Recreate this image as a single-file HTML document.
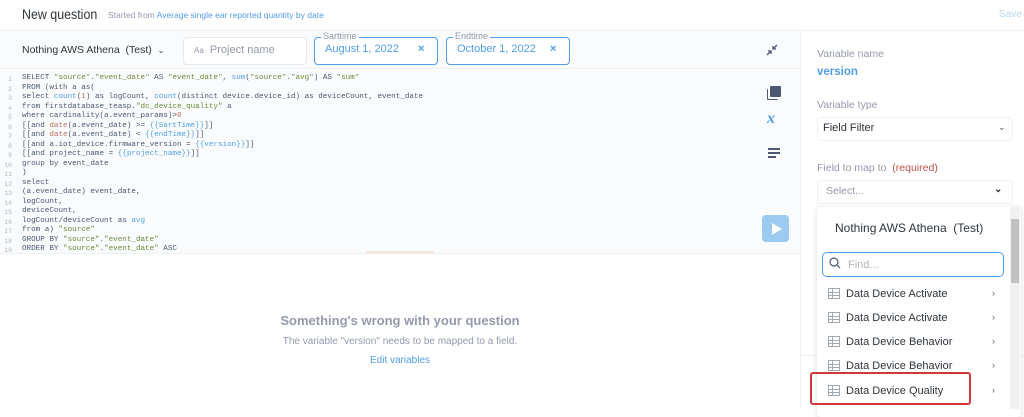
<!DOCTYPE html>
<html><head><meta charset="utf-8"><style>
*{box-sizing:border-box;margin:0;padding:0}
body{width:1024px;height:409px;overflow:hidden;background:#fff;font-family:"Liberation Sans",sans-serif;position:relative;color:#4c5773}
.abs{position:absolute}
.code{font-family:"Liberation Mono",monospace;font-size:7.6px;line-height:9.5px;color:#4c5773;white-space:pre}
.ln{font-family:"Liberation Mono",monospace;font-size:6.5px;line-height:9.5px;color:#b0b8c0;white-space:pre;text-align:right}
.s{color:#6a8a3a}.k{color:#509ee3}.r{color:#c07060}
.item{position:absolute;left:828px;font-size:11px;color:#2e353b}
.ic{display:inline-block;width:12px;height:11px;border:1px solid #a0a8b0;vertical-align:-2px;margin-right:6px;background:linear-gradient(#a0a8b0,#a0a8b0) 3px 0/1px 100% no-repeat,linear-gradient(#a0a8b0,#a0a8b0) 0 3px/100% 1px no-repeat,linear-gradient(#a0a8b0,#a0a8b0) 0 6px/100% 1px no-repeat}
.chev{position:absolute;left:992px;font-size:9px;color:#4c5773}
</style></head><body>
<div class="abs" style="left:22px;top:7px;font-size:13.5px;color:#2e353b;transform:scaleX(0.92);transform-origin:left">New question</div>
<div class="abs" style="left:108px;top:10px;font-size:8.5px;color:#949aab">Started from <span style="color:#509ee3">Average single ear reported quantity by date</span></div>
<div class="abs" style="left:999px;top:9px;font-size:10px;color:#b8d4ee">Save</div>
<div class="abs" style="left:0;top:30px;width:1024px;height:1px;background:#eef0f2"></div>
<div class="abs" style="left:0;top:31px;width:800px;height:38px;background:#f9fbfc;border-bottom:1px solid #eef0f2"></div>
<div class="abs" style="left:22px;top:44px;font-size:10.5px;color:#2e353b">Nothing AWS Athena &nbsp;(Test) &nbsp;<span style="font-size:8px">⌄</span></div>
<div class="abs" style="left:183px;top:37px;width:124px;height:28px;border:1px solid #e6e9ec;border-radius:4px;background:#fff"></div>
<div class="abs" style="left:194px;top:44px;font-size:11px;color:#949aab"><span style="font-size:8px">Aa</span>&nbsp; Project name</div>
<div class="abs" style="left:314px;top:37px;width:124px;height:28px;border:1px solid #509ee3;border-radius:4px;background:#fff"></div>
<div class="abs" style="left:321px;top:31px;font-size:9px;color:#949aab;background:#f9fbfc;padding:0 2px">Sarttime</div>
<div class="abs" style="left:325px;top:43px;font-size:11px;color:#509ee3">August 1, 2022</div>
<div class="abs" style="left:418px;top:43px;font-size:11px;color:#509ee3;font-weight:bold">×</div>
<div class="abs" style="left:446px;top:37px;width:124px;height:28px;border:1px solid #509ee3;border-radius:4px;background:#fff"></div>
<div class="abs" style="left:453px;top:31px;font-size:9px;color:#949aab;background:#f9fbfc;padding:0 2px">Endtime</div>
<div class="abs" style="left:457px;top:43px;font-size:11px;color:#509ee3">October 1, 2022</div>
<div class="abs" style="left:550px;top:43px;font-size:11px;color:#509ee3;font-weight:bold">×</div>
<svg class="abs" style="left:765px;top:43px" width="14" height="14"><path d="M2 12L6 8M3 8h3v3M12 2L8 6M11 6H8V3" stroke="#4c5773" stroke-width="1.3" fill="none"/></svg>
<div class="abs" style="left:0;top:70px;width:800px;height:184px;background:#f9fbfc;border-bottom:1px solid #eef0f2"></div>
<div class="abs ln" style="left:0;top:75px;width:12px">1
2
3
4
5
6
7
8
9
10
11
12
13
14
15
16
17
18
19</div>
<div class="abs code" style="left:22px;top:74px;height:179px;overflow:hidden">SELECT <span class="s">"source"</span>.<span class="s">"event_date"</span> AS <span class="s">"event_date"</span>, <span class="k">sum</span>(<span class="s">"source"</span>.<span class="s">"avg"</span>) AS <span class="s">"sum"</span>
FROM (with a as(
select <span class="k">count</span>(<span class="r">1</span>) as logCount, <span class="k">count</span>(distinct device.device_id) as deviceCount, event_date
from firstdatabase_teasp.<span class="s">"dc_device_quality"</span> a
where cardinality(a.event_params)&gt;<span class="r">0</span>
[[and <span class="r">date</span>(a.event_date) &gt;= <span class="k">{{SartTime}}</span>]]
[[and <span class="r">date</span>(a.event_date) &lt; <span class="k">{{endTime}}</span>]]
[[and a.iot_device.firmware_version = <span class="k">{{version}}</span>]]
[[and project_name = <span class="k">{{project_name}}</span>]]
group by event_date
)
select
(a.event_date) event_date,
logCount,
deviceCount,
logCount/deviceCount as <span class="k">avg</span>
from a) <span class="s">"source"</span>
GROUP BY <span class="s">"source"</span>.<span class="s">"event_date"</span>
ORDER BY <span class="s">"source"</span>.<span class="s">"event_date"</span> ASC</div>
<div class="abs" style="left:366px;top:251px;width:68px;height:3px;background:#f5e6e0"></div>
<div class="abs" style="left:770px;top:86px;width:11px;height:11px;background:#4c5773;border-radius:1px;box-shadow:-2px 2px 0 #f9fbfc,-3px 3px 0 #4c5773"></div>
<div class="abs" style="left:767px;top:110px;font-size:16px;font-style:italic;font-weight:bold;color:#509ee3;font-family:'Liberation Serif',serif">x</div>
<div class="abs" style="left:768px;top:148px;width:12px"><div style="height:2px;background:#4c5773;margin-bottom:2px"></div><div style="height:2px;background:#4c5773;margin-bottom:2px"></div><div style="height:2px;width:8px;background:#4c5773"></div></div>
<div class="abs" style="left:762px;top:215px;width:27px;height:27px;background:#9ccaf0;border-radius:4px"></div>
<svg class="abs" style="left:769px;top:222px" width="14" height="14"><path d="M3 1L13 7L3 13Z" fill="#fff"/></svg>
<div class="abs" style="left:0;top:313px;width:800px;text-align:center;font-size:13px;color:#949aab;font-weight:bold">Something's wrong with your question</div>
<div class="abs" style="left:0;top:336px;width:800px;text-align:center;font-size:10px;color:#949aab">The variable "version" needs to be mapped to a field.</div>
<div class="abs" style="left:0;top:355px;width:800px;text-align:center;font-size:10px;color:#509ee3">Edit variables</div>
<div class="abs" style="left:800px;top:31px;width:1px;height:378px;background:#eef0f2"></div>
<div class="abs" style="left:800px;top:355px;width:224px;height:1px;background:#eef0f2"></div>
<div class="abs" style="left:817px;top:48px;font-size:10.5px;color:#949aab">Variable name</div>
<div class="abs" style="left:817px;top:66px;font-size:11.5px;color:#509ee3;font-weight:bold">version</div>
<div class="abs" style="left:817px;top:99px;font-size:10.5px;color:#949aab">Variable type</div>
<div class="abs" style="left:817px;top:117px;width:196px;height:24px;border:1px solid #eef0f2;border-radius:4px;background:#fff"></div>
<div class="abs" style="left:823px;top:122px;font-size:11px;color:#2e353b">Field Filter</div>
<div class="abs" style="left:998px;top:122px;font-size:9px;color:#4c5773">⌄</div>
<div class="abs" style="left:817px;top:162px;font-size:10.5px;color:#949aab">Field to map to &nbsp;<span style="color:#c0504d">(required)</span></div>
<div class="abs" style="left:817px;top:180px;width:196px;height:24px;border:1px solid #eef0f2;border-radius:4px;background:#fff"></div>
<div class="abs" style="left:826px;top:185px;font-size:10.5px;color:#949aab">Select...</div>
<div class="abs" style="left:994px;top:184px;font-size:10px;color:#2e353b;font-weight:bold">⌄</div>
<div class="abs" style="left:817px;top:207px;width:204px;height:210px;background:#fff;box-shadow:0 1px 6px rgba(0,0,0,.15);border-radius:4px"></div>
<div class="abs" style="left:1010px;top:207px;width:10px;height:202px;background:#f1f1f1"></div>
<div class="abs" style="left:1011px;top:219px;width:8px;height:64px;background:#c1c1c1"></div>
<div class="abs" style="left:835px;top:221px;font-size:12px;color:#2e353b">Nothing AWS Athena &nbsp;(Test)</div>
<div class="abs" style="left:822px;top:252px;width:182px;height:25px;border:1px solid #509ee3;border-radius:5px"></div>
<svg class="abs" style="left:829px;top:257px" width="12" height="12"><circle cx="5" cy="5" r="4" stroke="#4c5773" fill="none" stroke-width="1.2"/><path d="M8 8l3 3" stroke="#4c5773" stroke-width="1.2"/></svg>
<div class="abs" style="left:848px;top:259px;font-size:11px;color:#b0b8c0">Find...</div>
<div class="item" style="top:288px"><span class="ic"></span>Data Device Activate</div><div class="chev" style="top:288px">›</div>
<div class="item" style="top:312px"><span class="ic"></span>Data Device Activate</div><div class="chev" style="top:312px">›</div>
<div class="item" style="top:336px"><span class="ic"></span>Data Device Behavior</div><div class="chev" style="top:336px">›</div>
<div class="item" style="top:360px"><span class="ic"></span>Data Device Behavior</div><div class="chev" style="top:360px">›</div>
<div class="item" style="top:385px"><span class="ic"></span>Data Device Quality</div><div class="chev" style="top:385px">›</div>
<div class="abs" style="left:810px;top:372px;width:161px;height:33px;border:2px solid #d0393a;border-radius:3px"></div>
</body></html>
